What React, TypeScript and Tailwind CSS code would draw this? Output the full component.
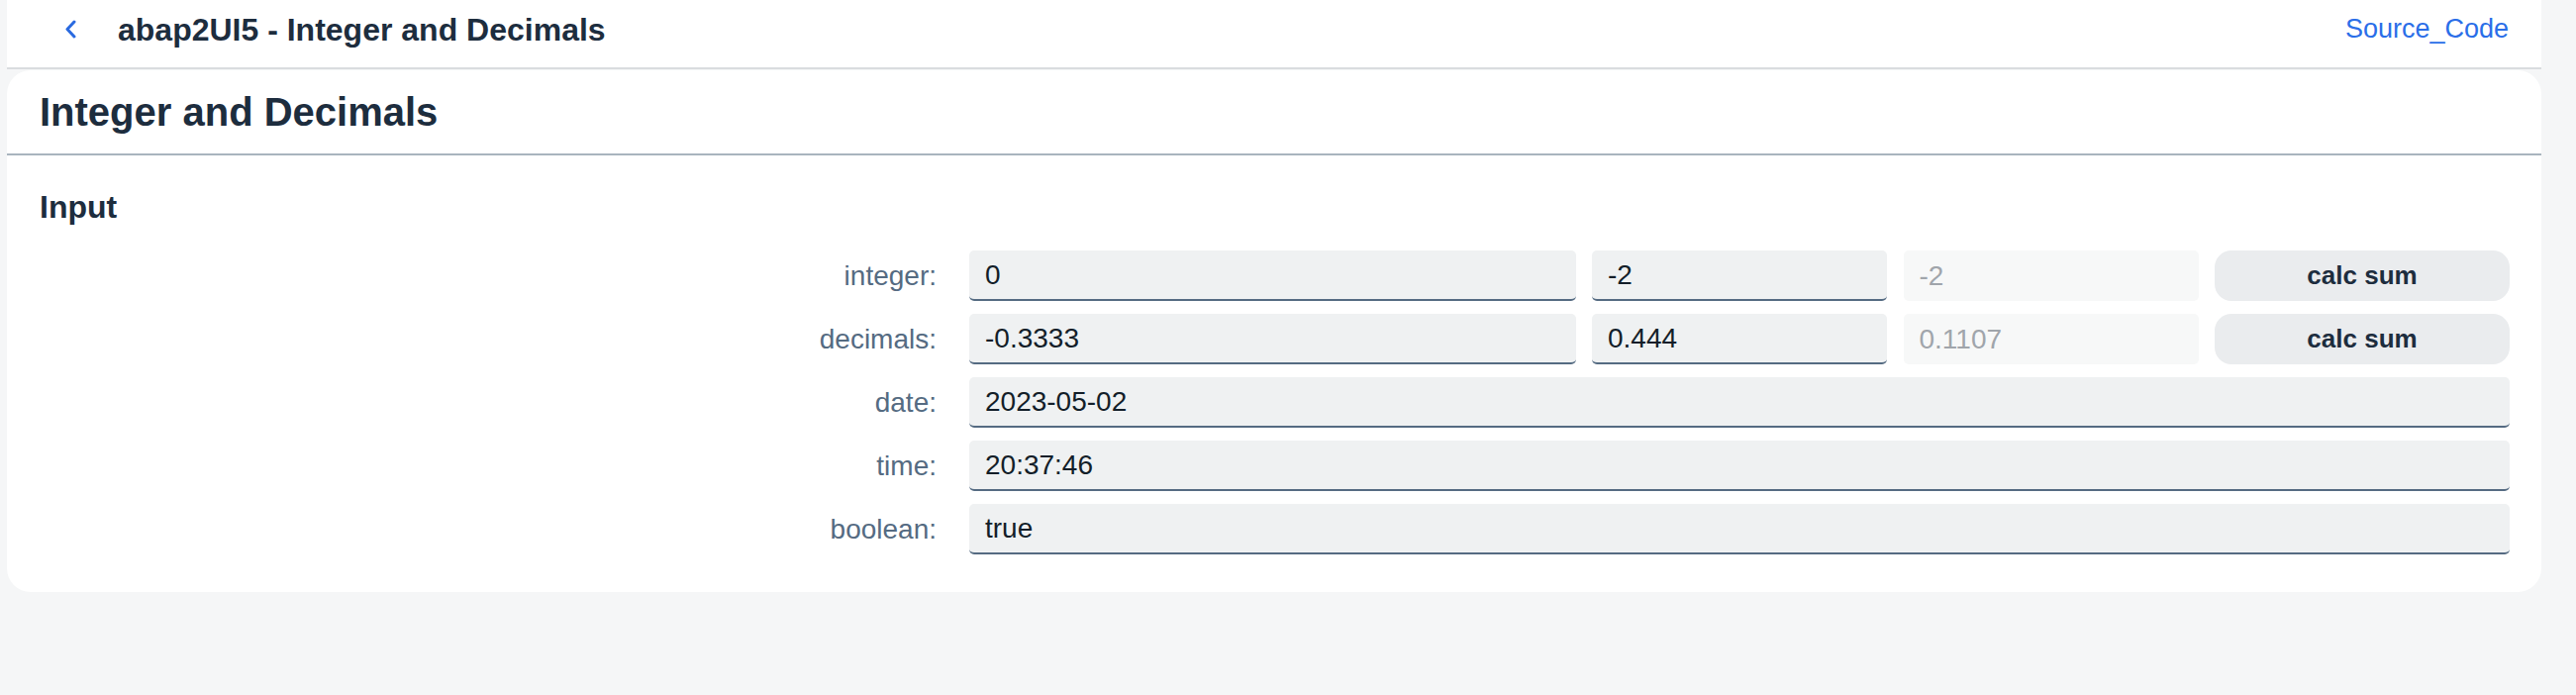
const Field = ({ value, span = "" }: { value: string; span?: string }) => (
  <div
    className={`flex h-[51px] items-center rounded-[5px] border-b-2 border-[#556b82] bg-[#eff1f2] px-4 text-[28px] text-[#131e29] ${span}`}
  >
    {value}
  </div>
);

const ReadOnly = ({ value }: { value: string }) => (
  <div className="flex h-[51px] items-center rounded-[5px] bg-[#f7f8f8] px-4 text-[28px] text-[#a0a5ab]">
    {value}
  </div>
);

const CalcButton = () => (
  <button className="flex h-[51px] items-center justify-center rounded-[17px] bg-[#eaecee] text-[26px] font-bold text-[#1d2d3e]">
    calc sum
  </button>
);

const Row = ({ label, children }: { label: string; children: React.ReactNode }) => (
  <div className="flex items-center gap-[33px]">
    <div className="w-[906px] shrink-0 text-right text-[28px] text-[#556b82]">{label}</div>
    <div className="grid flex-1 grid-cols-5 gap-x-[16.5px]">{children}</div>
  </div>
);

const App = () => {
  return (
    <div className="min-h-screen bg-[#f5f6f7] pl-[7px] pr-[35px] font-['Liberation_Sans',Arial,sans-serif]">
      <header className="flex h-[70px] items-start border-b-2 border-[#d9dcdf] bg-white">
        <div className="flex h-[59px] w-full items-center pl-[58px] pr-[33px]">
          <svg width="12" height="19" viewBox="0 0 12 19" className="shrink-0">
            <path
              d="M10 2 L3 9.5 L10 17"
              fill="none"
              stroke="#2a6ae0"
              strokeWidth="3"
              strokeLinecap="round"
              strokeLinejoin="round"
            />
          </svg>
          <h1 className="ml-[42px] text-[32px] font-bold text-[#1d2d3e]">abap2UI5 - Integer and Decimals</h1>
          <a className="ml-auto text-[27px] text-[#2a6ee8]">Source_Code</a>
        </div>
      </header>

      <section className="mt-px rounded-[24px] bg-white">
        <div className="flex h-[86px] items-center border-b-2 border-[#a9b4be] px-[33px]">
          <h2 className="text-[40px] font-bold text-[#1d2d3e]">Integer and Decimals</h2>
        </div>

        <div className="pb-[38px] pl-[33px] pr-[32px] pt-[36px]">
          <h3 className="text-[32px] font-bold leading-none text-[#1d2d3e]">Input</h3>

          <div className="mt-[28px] flex flex-col gap-[13px]">
            <Row label="integer:">
              <Field value="0" span="col-span-2" />
              <Field value="-2" />
              <ReadOnly value="-2" />
              <CalcButton />
            </Row>
            <Row label="decimals:">
              <Field value="-0.3333" span="col-span-2" />
              <Field value="0.444" />
              <ReadOnly value="0.1107" />
              <CalcButton />
            </Row>
            <Row label="date:">
              <Field value="2023-05-02" span="col-span-5" />
            </Row>
            <Row label="time:">
              <Field value="20:37:46" span="col-span-5" />
            </Row>
            <Row label="boolean:">
              <Field value="true" span="col-span-5" />
            </Row>
          </div>
        </div>
      </section>
    </div>
  );
};

export default App;
